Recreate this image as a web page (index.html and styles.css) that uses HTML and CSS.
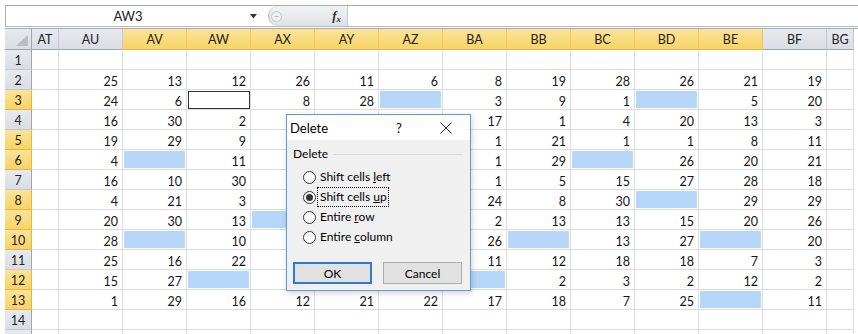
FILE: index.html
```html
<!DOCTYPE html>
<html>
<head>
<meta charset="utf-8">
<link rel="stylesheet" href="styles.css">
</head>
<body>
<div class="app">
  <div class="fbar">
    <div class="namebox">
      <span class="nb-text">AW3</span>
      <svg class="dd" width="8" height="5" viewBox="0 0 8 5"><path d="M0 0H7L3.5 4.5Z" fill="#333"/></svg>
    </div>
    <div class="pill">
      <span class="knob"><svg width="11" height="11" viewBox="0 0 11 11"><circle cx="5.5" cy="5.5" r="5" fill="#eef0f3" stroke="#c3c8cf"/><path d="M3.5 5.5H7.5" stroke="#b9bec5" stroke-width="1.2"/></svg></span>
      <span class="fx"><i>f</i><sub>x</sub></span>
    </div>
    <div class="finput"></div>
  </div>
  <div class="sep"></div>
  <div class="sheet">
    <div class="hd corner"><svg width="12" height="11" viewBox="0 0 12 11"><path d="M12 0V11H0Z" fill="#b9bdc3"/></svg></div>
    <div class="hd">AT</div><div class="hd">AU</div><div class="hd y">AV</div><div class="hd y">AW</div><div class="hd y">AX</div><div class="hd y">AY</div><div class="hd y">AZ</div><div class="hd y">BA</div><div class="hd y">BB</div><div class="hd y">BC</div><div class="hd y">BD</div><div class="hd y">BE</div><div class="hd">BF</div><div class="hd">BG</div>

    <div class="rh">1</div><div class="c"></div><div class="c"></div><div class="c"></div><div class="c"></div><div class="c"></div><div class="c"></div><div class="c"></div><div class="c"></div><div class="c"></div><div class="c"></div><div class="c"></div><div class="c"></div><div class="c"></div><div class="c"></div>

    <div class="rh">2</div><div class="c"></div><div class="c">25</div><div class="c">13</div><div class="c">12</div><div class="c">26</div><div class="c">11</div><div class="c">6</div><div class="c">8</div><div class="c">19</div><div class="c">28</div><div class="c">26</div><div class="c">21</div><div class="c">19</div><div class="c"></div>

    <div class="rh y">3</div><div class="c"></div><div class="c">24</div><div class="c">6</div><div class="c sel"></div><div class="c">8</div><div class="c">28</div><div class="c hl"></div><div class="c">3</div><div class="c">9</div><div class="c">1</div><div class="c hl"></div><div class="c">5</div><div class="c">20</div><div class="c"></div>

    <div class="rh">4</div><div class="c"></div><div class="c">16</div><div class="c">30</div><div class="c">2</div><div class="c"></div><div class="c"></div><div class="c"></div><div class="c">17</div><div class="c">1</div><div class="c">4</div><div class="c">20</div><div class="c">13</div><div class="c">3</div><div class="c"></div>

    <div class="rh y">5</div><div class="c"></div><div class="c">19</div><div class="c">29</div><div class="c">9</div><div class="c"></div><div class="c hl"></div><div class="c"></div><div class="c">1</div><div class="c">21</div><div class="c">1</div><div class="c">1</div><div class="c">8</div><div class="c">11</div><div class="c"></div>

    <div class="rh y">6</div><div class="c"></div><div class="c">4</div><div class="c hl"></div><div class="c">11</div><div class="c"></div><div class="c"></div><div class="c"></div><div class="c">1</div><div class="c">29</div><div class="c hl"></div><div class="c">26</div><div class="c">20</div><div class="c">21</div><div class="c"></div>

    <div class="rh">7</div><div class="c"></div><div class="c">16</div><div class="c">10</div><div class="c">30</div><div class="c"></div><div class="c"></div><div class="c"></div><div class="c">1</div><div class="c">5</div><div class="c">15</div><div class="c">27</div><div class="c">28</div><div class="c">18</div><div class="c"></div>

    <div class="rh y">8</div><div class="c"></div><div class="c">4</div><div class="c">21</div><div class="c">3</div><div class="c"></div><div class="c"></div><div class="c"></div><div class="c">24</div><div class="c">8</div><div class="c">30</div><div class="c hl"></div><div class="c">29</div><div class="c">29</div><div class="c"></div>

    <div class="rh y">9</div><div class="c"></div><div class="c">20</div><div class="c">30</div><div class="c">13</div><div class="c hl"></div><div class="c"></div><div class="c"></div><div class="c">2</div><div class="c">13</div><div class="c">13</div><div class="c">15</div><div class="c">20</div><div class="c">26</div><div class="c"></div>

    <div class="rh y">10</div><div class="c"></div><div class="c">28</div><div class="c hl"></div><div class="c">10</div><div class="c"></div><div class="c"></div><div class="c"></div><div class="c">26</div><div class="c hl"></div><div class="c">13</div><div class="c">27</div><div class="c hl"></div><div class="c">20</div><div class="c"></div>

    <div class="rh">11</div><div class="c"></div><div class="c">25</div><div class="c">16</div><div class="c">22</div><div class="c"></div><div class="c"></div><div class="c"></div><div class="c">11</div><div class="c">12</div><div class="c">18</div><div class="c">18</div><div class="c">7</div><div class="c">3</div><div class="c"></div>

    <div class="rh y">12</div><div class="c"></div><div class="c">15</div><div class="c">27</div><div class="c hl"></div><div class="c"></div><div class="c"></div><div class="c"></div><div class="c hl"></div><div class="c">2</div><div class="c">3</div><div class="c">2</div><div class="c">12</div><div class="c">2</div><div class="c"></div>

    <div class="rh y">13</div><div class="c"></div><div class="c">1</div><div class="c">29</div><div class="c">16</div><div class="c">12</div><div class="c">21</div><div class="c">22</div><div class="c">17</div><div class="c">18</div><div class="c">7</div><div class="c">25</div><div class="c hl"></div><div class="c">11</div><div class="c"></div>

    <div class="rh">14</div><div class="c"></div><div class="c"></div><div class="c"></div><div class="c"></div><div class="c"></div><div class="c"></div><div class="c"></div><div class="c"></div><div class="c"></div><div class="c"></div><div class="c"></div><div class="c"></div><div class="c"></div><div class="c"></div>

    <div class="rh"></div><div class="c"></div><div class="c"></div><div class="c"></div><div class="c"></div><div class="c"></div><div class="c"></div><div class="c"></div><div class="c"></div><div class="c"></div><div class="c"></div><div class="c"></div><div class="c"></div><div class="c"></div><div class="c"></div>
  </div>

  <div class="dialog">
    <div class="dlg-title">
      <span class="dlg-name">Delete</span>
      <span class="dlg-help">?</span>
      <svg class="dlg-close" width="12" height="12" viewBox="0 0 12 12"><path d="M0.5 0.5L11.5 11.5M11.5 0.5L0.5 11.5" stroke="#222" stroke-width="1"/></svg>
    </div>
    <div class="dlg-body">
      <div class="grp"><span>Delete</span><span class="grp-line"></span></div>
      <div class="opts">
        <div class="opt"><span class="radio"></span><span class="lbl">Shift cells <u>l</u>eft</span></div>
        <div class="opt"><span class="radio on"></span><span class="lbl focus">Shift cells <u>u</u>p</span></div>
        <div class="opt"><span class="radio"></span><span class="lbl">Entire <u>r</u>ow</span></div>
        <div class="opt"><span class="radio"></span><span class="lbl">Entire <u>c</u>olumn</span></div>
      </div>
      <div class="btns">
        <div class="btn def">OK</div>
        <div class="btn">Cancel</div>
      </div>
    </div>
  </div>
</div>
</body>
</html>
```
FILE: styles.css
```css
body {
  margin: 0;
  background: #fff;
  font-family: Lato, "Open Sans", sans-serif;
  color: #1b1b1b;
}

.app {
  position: relative;
  width: 858px;
  height: 334px;
  box-sizing: border-box;
  padding: 5px 0 0 5px;
  overflow: hidden;
}

/* formula bar */
.fbar {
  display: flex;
  height: 20px;
  border-top: 1px solid #a9adb3;
  border-left: 1px solid #a9adb3;
}

.namebox {
  width: 262px;
  display: flex;
  align-items: center;
}

.nb-text {
  flex: 1;
  text-align: center;
  font-size: 13px;
  padding-left: 4px;
}

.dd {
  margin: 1px 10px 0 4px;
}

.pill {
  width: 79px;
  display: flex;
  align-items: center;
  justify-content: space-between;
  background: linear-gradient(#f1f2f4, #dfe2e6);
  border-left: 1px solid #b4b9c0;
  border-radius: 10px 0 0 10px;
  padding: 0 4px 0 2px;
  box-sizing: border-box;
}

.knob {
  display: flex;
}

.fx {
  font-family: "Liberation Serif", serif;
  font-size: 13px;
  font-weight: bold;
  color: #333;
  padding-right: 2px;
}

.fx sub {
  font-size: 9px;
  font-style: italic;
  vertical-align: -2px;
}

.finput {
  flex: 1;
  border-left: 1px solid #c6cad0;
}

.sep {
  height: 1px;
  border-top: 1px solid #b5b9bf;
  border-bottom: 1px solid #a6abb3;
}

/* sheet */
.sheet {
  display: grid;
  grid-template-columns: 27px 27px repeat(12, 64px) 27px;
  grid-auto-rows: 20px;
  grid-template-rows: 21px;
  font-size: 12px;
}

.hd {
  display: flex;
  align-items: center;
  justify-content: center;
  background: linear-gradient(#e6e9ed, #dadee4);
  border-right: 1px solid #c3c8cf;
  border-bottom: 1px solid #9ea5ae;
  color: #222;
  font-size: 12.5px;
  padding-top: 1px;
}

.hd.corner {
  justify-content: flex-end;
  align-items: flex-end;
  padding: 0 3px 3px 0;
  border-right-color: #9ea5ae;
}

.hd.y {
  background: linear-gradient(#fbe39b, #f8d465);
  border-right-color: #f1c35d;
  border-bottom-color: #ecb340;
}

.rh {
  display: flex;
  align-items: center;
  justify-content: center;
  background: linear-gradient(#e6e9ed, #dadee4);
  border-right: 1px solid #9ea5ae;
  border-bottom: 1px solid #c3c8cf;
  color: #222;
  font-size: 12.5px;
  padding-top: 1px;
}

.rh.y {
  background: linear-gradient(#fbe39b, #f8d465);
  border-bottom-color: #ecb340;
  border-right-color: #ecb340;
}

.c {
  border-right: 1px solid #dadcdd;
  border-bottom: 1px solid #dadcdd;
  text-align: right;
  padding: 4px 4px 0 0;
  line-height: 15px;
  font-size: 12.5px;
  color: #151515;
}

.c.hl {
  background: #b6d7fa;
  box-shadow: inset 1px 1px 0 #fff, inset -1px -1px 0 #fff;
}

.c.sel {
  outline: 1px solid #333;
  outline-offset: -2px;
}

/* dialog */
.dialog {
  position: absolute;
  left: 286px;
  top: 114px;
  width: 185px;
  height: 177px;
  box-sizing: border-box;
  border: 1px solid #5d9ddb;
  background: #f0f0f0;
  box-shadow: 1px 2px 6px rgba(0, 0, 0, 0.18);
  display: flex;
  flex-direction: column;
  font-size: 12px;
  color: #000;
}

.dlg-title {
  height: 25px;
  background: #fff;
  display: flex;
  align-items: center;
  padding-left: 3px;
}

.dlg-name {
  font-size: 13px;
  flex: 1;
}

.dlg-help {
  font-size: 13px;
  width: 12px;
  margin-right: 32px;
}

.dlg-close {
  margin-right: 18px;
}

.dlg-body {
  flex: 1;
  padding: 7px 7px 0 6px;
}

.grp {
  display: flex;
  align-items: center;
  height: 13px;
  font-size: 12px;
}

.grp-line {
  flex: 1;
  height: 1px;
  background: #d9d9d9;
  margin-left: 5px;
  margin-top: 2px;
}

.opts {
  display: flex;
  flex-direction: column;
  padding: 7px 0 0 10px;
}

.opt {
  height: 20px;
  display: flex;
  align-items: center;
}

.radio {
  width: 13px;
  height: 13px;
  box-sizing: border-box;
  border: 1px solid #333;
  border-radius: 50%;
  background: #fff;
  display: flex;
  align-items: center;
  justify-content: center;
  margin-right: 4px;
}

.radio.on::after {
  content: "";
  width: 7px;
  height: 7px;
  border-radius: 50%;
  background: #333;
}

.lbl {
  font-size: 12px;
  padding: 1px 1px 2px 0;
}

.lbl.focus {
  outline: 1px dotted #000;
  outline-offset: 0;
  margin-left: -2px;
  padding-left: 2px;
}

.btns {
  display: flex;
  gap: 11px;
  padding-top: 15px;
}

.btn {
  width: 79px;
  height: 22px;
  box-sizing: border-box;
  border: 1px solid #adadad;
  background: #e1e1e1;
  display: flex;
  align-items: center;
  justify-content: center;
  font-size: 12px;
}

.btn.def {
  border: 2px solid #2a7bd4;
}
```
